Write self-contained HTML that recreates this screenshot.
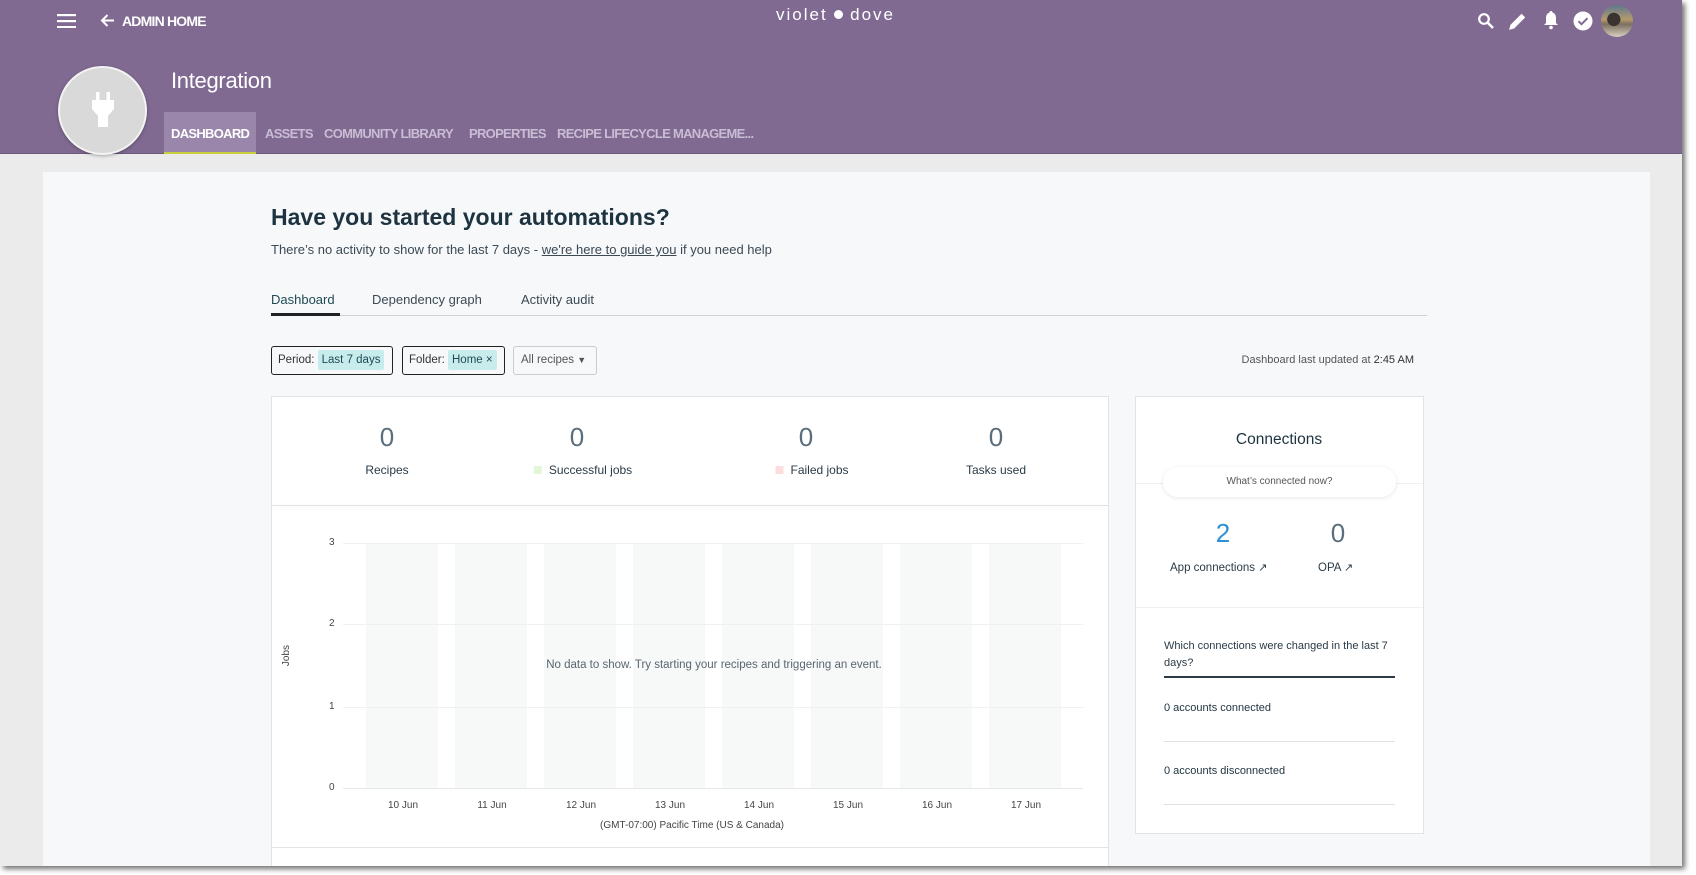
<!DOCTYPE html>
<html><head><meta charset="utf-8"><style>
*{margin:0;padding:0;box-sizing:border-box}
body{width:1696px;height:875px;background:#fff;position:relative;overflow:hidden;font-family:"Liberation Sans",sans-serif;color:#2a3b47}
.a{position:absolute;white-space:nowrap}
#frame{position:absolute;left:0;top:0;width:1682px;height:866px;background:#ebebeb;box-shadow:3px 3px 5px rgba(0,0,0,.55);overflow:hidden}
#hdr{position:absolute;left:0;top:0;width:1682px;height:154px;background:#806a92;border-bottom:1px solid #6e5b80}
.nav{color:#fff;font-weight:bold;font-size:14px;letter-spacing:-0.8px}
.tab{color:#c9bcd4;font-weight:bold;font-size:13px;letter-spacing:-0.7px;top:126px}
#card{position:absolute;left:43px;top:172px;width:1607px;height:700px;background:#f7f8fa}
.box{position:absolute;background:#fff;border:1px solid #e0e3e7}
.num{font-size:26px;color:#5a6e7c;transform:translateX(-50%)}
.lbl{font-size:12px;color:#2a3b47;transform:translateX(-50%)}
.bar{position:absolute;top:543px;width:72px;height:245px;background:#f7f8f8}
.gl{position:absolute;left:343px;width:740px;height:1px;background:#eef0f1}
.xl{font-size:10px;color:#444;transform:translateX(-50%);top:800px}
.yl{font-size:10px;color:#444;left:329px}
.f{position:absolute;top:346px;height:29px;border:1px solid #222;border-radius:3px;font-size:12px;color:#333;padding:3px 4px 0 7px;line-height:20px;white-space:nowrap;overflow:hidden}
.chip{display:inline-block;background:#c8ecec;border-radius:2px;padding:0 4px;color:#1f4a55}
</style></head><body>
<div id="frame">
<div id="hdr">
  <svg class="a" style="left:57px;top:14px" width="19" height="14"><rect y="0" width="19" height="2.2" fill="#fff"/><rect y="6" width="19" height="2.2" fill="#fff"/><rect y="12" width="19" height="2.2" fill="#fff"/></svg>
  <svg class="a" style="left:100px;top:13px" width="15" height="15" viewBox="0 0 15 15"><path d="M14 7.5H2M7.5 2L2 7.5 7.5 13" stroke="#fff" stroke-width="2" fill="none"/></svg>
  <div class="a nav" style="left:122px;top:13px">ADMIN HOME</div>
  <div class="a" style="left:776px;top:5px;color:#fff;font-size:17px;letter-spacing:2px">violet <span style="display:inline-block;width:9px;height:9px;border-radius:50%;background:#fff;vertical-align:1px"></span> dove</div>
  <svg class="a" style="left:1477px;top:12px" width="18" height="18" viewBox="0 0 18 18"><circle cx="7" cy="7" r="4.8" stroke="#fff" stroke-width="2.2" fill="none"/><path d="M10.5 10.5L16 16" stroke="#fff" stroke-width="2.6"/></svg>
  <svg class="a" style="left:1508px;top:11px" width="20" height="20" viewBox="0 0 18 18"><path d="M1 17l1.2-4.5 10-10 3.3 3.3-10 10z" fill="#fff"/></svg>
  <svg class="a" style="left:1542px;top:10px" width="18" height="20" viewBox="0 0 18 20"><path d="M9 1a1.5 1.5 0 0 1 1.5 1.5C13 3.3 14 5.5 14 8v5l2 2H2l2-2V8c0-2.5 1-4.7 3.5-5.5A1.5 1.5 0 0 1 9 1z" fill="#fff"/><circle cx="9" cy="17.5" r="1.8" fill="#fff"/></svg>
  <svg class="a" style="left:1573px;top:11px" width="20" height="20" viewBox="0 0 20 20"><circle cx="10" cy="10" r="9.5" fill="#fff"/><path d="M5.5 10.2l3 3 6-6" stroke="#806a92" stroke-width="2" fill="none"/></svg>
  <div class="a" style="left:1601px;top:5px;width:32px;height:32px;border-radius:50%;background:radial-gradient(circle at 40% 45%,#3a3330 0 25%,transparent 26%),linear-gradient(180deg,#5d7890 0%,#b49a6c 45%,#7c7060 60%,#d8d0c0 100%)"></div>
  <div class="a" style="left:58px;top:66px;width:89px;height:89px;border-radius:50%;background:#d9d9d9;border:2px solid #f3f3f3;box-shadow:0 1px 3px rgba(0,0,0,.3)"></div>
  <svg class="a" style="left:91px;top:92px" width="24" height="35" viewBox="0 0 24 35"><rect x="5" y="0" width="3.5" height="9" fill="#fff"/><rect x="15.5" y="0" width="3.5" height="9" fill="#fff"/><path d="M1 8h22v9l-6 7v11H7V24l-6-7z" fill="#fff"/></svg>
  <div class="a" style="left:171px;top:68px;color:#fff;font-size:22px;letter-spacing:-0.3px">Integration</div>
  <div class="a" style="left:164px;top:112px;width:92px;height:42px;background:#9a86aa;border-bottom:2px solid #c9cf3b"></div>
  <div class="a tab" style="left:171px;color:#fff">DASHBOARD</div>
  <div class="a tab" style="left:265px">ASSETS</div>
  <div class="a tab" style="left:324px">COMMUNITY LIBRARY</div>
  <div class="a tab" style="left:469px">PROPERTIES</div>
  <div class="a tab" style="left:557px">RECIPE LIFECYCLE MANAGEME...</div>
</div>
<div id="card"></div>
<div class="a" style="left:271px;top:204px;font-size:23px;font-weight:bold;color:#1e3340">Have you started your automations?</div>
<div class="a" style="left:271px;top:242px;font-size:13px;color:#3b4a55">There’s no activity to show for the last 7 days - <span style="text-decoration:underline">we're here to guide you</span> if you need help</div>
<div class="a" style="left:271px;top:292px;font-size:13px;color:#1f4a55">Dashboard</div>
<div class="a" style="left:372px;top:292px;font-size:13px;color:#3b4a55">Dependency graph</div>
<div class="a" style="left:521px;top:292px;font-size:13px;color:#3b4a55">Activity audit</div>
<div class="a" style="left:271px;top:315px;width:1156px;height:1px;background:#ccd2d8"></div>
<div class="a" style="left:271px;top:313px;width:69px;height:3px;background:#222"></div>
<div class="f" style="left:271px;width:122px;font-size:11.5px;padding-left:6px">Period: <span class="chip">Last 7 days</span></div>
<div class="f" style="left:402px;width:103px;font-size:11.5px;padding-left:6px">Folder: <span class="chip">Home ×</span></div>
<div class="f" style="left:513px;width:84px;border-color:#c8cdd2;color:#555;font-size:11.5px">All recipes <span style="font-size:9px">▼</span></div>
<div class="a" style="right:268px;top:354px;font-size:11px;color:#555">Dashboard last updated at <span style="color:#333">2:45 AM</span></div>
<div class="box" style="left:271px;top:396px;width:838px;height:480px"></div>
<div class="a" style="left:272px;top:505px;width:836px;height:1px;background:#e0e3e7;box-shadow:0 2px 4px rgba(0,0,0,.05)"></div>
<div class="a" style="left:272px;top:847px;width:836px;height:1px;background:#e0e3e7"></div>
<div class="a num" style="left:387px;top:422px">0</div><div class="a lbl" style="left:387px;top:463px">Recipes</div>
<div class="a num" style="left:577px;top:422px">0</div><div class="a lbl" style="left:583px;top:463px"><span style="display:inline-block;width:8px;height:8px;background:#e3f6da;margin-right:7px"></span>Successful jobs</div>
<div class="a num" style="left:806px;top:422px">0</div><div class="a lbl" style="left:812px;top:463px"><span style="display:inline-block;width:8px;height:8px;background:#fcdede;margin-right:7px"></span>Failed jobs</div>
<div class="a num" style="left:996px;top:422px">0</div><div class="a lbl" style="left:996px;top:463px">Tasks used</div>
<div class="bar" style="left:366px"></div><div class="bar" style="left:455px"></div><div class="bar" style="left:544px"></div><div class="bar" style="left:633px"></div><div class="bar" style="left:722px"></div><div class="bar" style="left:811px"></div><div class="bar" style="left:900px"></div><div class="bar" style="left:989px"></div>
<div class="gl" style="top:543px"></div><div class="gl" style="top:624px"></div><div class="gl" style="top:707px"></div><div class="gl" style="top:788px;background:#e6e8ea"></div>
<div class="a yl" style="top:537px">3</div><div class="a yl" style="top:618px">2</div><div class="a yl" style="top:701px">1</div><div class="a yl" style="top:782px">0</div>
<div class="a xl" style="left:403px">10 Jun</div><div class="a xl" style="left:492px">11 Jun</div><div class="a xl" style="left:581px">12 Jun</div><div class="a xl" style="left:670px">13 Jun</div><div class="a xl" style="left:759px">14 Jun</div><div class="a xl" style="left:848px">15 Jun</div><div class="a xl" style="left:937px">16 Jun</div><div class="a xl" style="left:1026px">17 Jun</div>
<div class="a" style="left:692px;top:820px;font-size:10px;color:#444;transform:translateX(-50%)">(GMT-07:00) Pacific Time (US &amp; Canada)</div>
<div class="a" style="left:276px;top:650px;font-size:10px;color:#444;transform:rotate(-90deg)">Jobs</div>
<div class="a" style="left:714px;top:659px;font-size:11.5px;color:#5a6670;transform:translateX(-50%)">No data to show. Try starting your recipes and triggering an event.</div>
<div class="box" style="left:1135px;top:396px;width:289px;height:438px"></div>
<div class="a" style="left:1136px;top:483px;width:287px;height:1px;background:#eef0f2"></div>
<div class="a" style="left:1279px;top:431px;font-size:15.5px;color:#1e3340;transform:translateX(-50%)">Connections</div>
<div class="a" style="left:1163px;top:467px;width:233px;height:30px;background:#fff;border-radius:15px;box-shadow:0 1px 5px rgba(0,0,0,.1);font-size:10px;color:#555;text-align:center;line-height:30px">What’s connected now?</div>
<div class="a" style="left:1223px;top:518px;font-size:26px;color:#2d8fd5;transform:translateX(-50%)">2</div>
<div class="a" style="left:1338px;top:518px;font-size:26px;color:#5a6e7c;transform:translateX(-50%)">0</div>
<div class="a" style="left:1170px;top:561px;font-size:11.5px;color:#2a3b47">App connections <span style="font-size:11px">↗</span></div>
<div class="a" style="left:1318px;top:561px;font-size:11.5px;color:#2a3b47">OPA <span style="font-size:11px">↗</span></div>
<div class="a" style="left:1136px;top:607px;width:287px;height:1px;background:#eef0f2"></div>
<div class="a" style="left:1164px;top:638px;font-size:11px;line-height:17px;color:#2a3b47;white-space:normal;width:225px">Which connections were changed in the last 7 days?</div>
<div class="a" style="left:1164px;top:676px;width:231px;height:2px;background:#2a3b47"></div>
<div class="a" style="left:1164px;top:702px;font-size:11px;color:#1e3340">0 accounts connected</div>
<div class="a" style="left:1164px;top:741px;width:231px;height:1px;background:#dde1e5"></div>
<div class="a" style="left:1164px;top:765px;font-size:11px;color:#1e3340">0 accounts disconnected</div>
<div class="a" style="left:1164px;top:804px;width:231px;height:1px;background:#dde1e5"></div>
</div>
</body></html>
